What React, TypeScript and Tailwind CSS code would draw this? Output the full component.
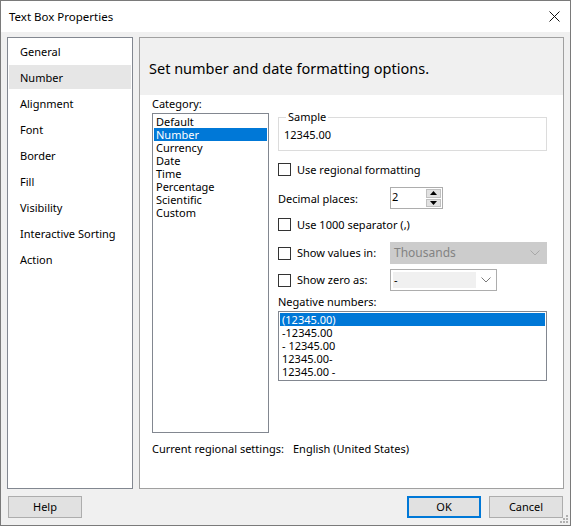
import React from "react";

const font = { fontFamily: '"Noto Sans", "Open Sans", sans-serif' };

function Checkbox() {
  return <span className="inline-block w-[13px] h-[13px] border border-[#333333] bg-white shrink-0" />;
}

function Chevron({ color }: { color: string }) {
  return (
    <svg width="10" height="6" viewBox="0 0 10 6" className="shrink-0">
      <path d="M0.5 0.5 L5 5 L9.5 0.5" fill="none" stroke={color} strokeWidth="1" />
    </svg>
  );
}

export default function App() {
  const nav = ["General", "Number", "Alignment", "Font", "Border", "Fill", "Visibility", "Interactive Sorting", "Action"];
  const cats = ["Default", "Number", "Currency", "Date", "Time", "Percentage", "Scientific", "Custom"];
  const negs = ["(12345.00)", "-12345.00", "- 12345.00", "12345.00-", "12345.00 -"];
  return (
    <div
      className="relative w-[571px] h-[526px] border border-[#7a7a7a] bg-[#f0f0f0] flex flex-col text-[11px] text-black"
      style={font}
    >
      {/* Title bar */}
      <div className="h-[31px] bg-white flex items-center justify-between pl-[8px] pr-[10px] shrink-0">
        <span className="leading-[16px] text-[11.5px]">Text Box Properties</span>
        <svg width="11" height="11" viewBox="0 0 11 11">
          <path d="M0.5 0.5 L10.5 10.5 M10.5 0.5 L0.5 10.5" stroke="#111" strokeWidth="1" />
        </svg>
      </div>

      {/* Body */}
      <div className="flex gap-[6px] pl-[6px] pt-[5px]">
        {/* Nav */}
        <div className="w-[126px] h-[452px] border border-[#828790] bg-white px-[1px] pt-[1px] flex flex-col gap-[2px]">
          {nav.map((n) => (
            <div
              key={n}
              className={`h-[24px] flex items-center pl-[11px] pt-[2px] leading-[16px] ${n === "Number" ? "bg-[#e6e6e6]" : ""}`}
            >
              {n}
            </div>
          ))}
        </div>

        {/* Main panel */}
        <div className="w-[425px] h-[452px] border border-[#a0a0a0] bg-white flex flex-col">
          <div className="h-[57px] bg-[#f0f0f0] flex items-center pl-[9px] pt-[2px]">
            <span className="text-[14.5px] leading-[20px]">Set number and date formatting options.</span>
          </div>
          <div className="pl-[12px] flex flex-col">
            <div className="flex gap-[9px]">
              {/* Category column */}
              <div className="w-[117px] flex flex-col">
                <div className="h-[16px] leading-[16px] pt-[1px]">Category:</div>
                <div className="mt-[2px] h-[320px] border border-[#828790] p-[1px] flex flex-col">
                  {cats.map((c) => (
                    <div
                      key={c}
                      className={`h-[13px] leading-[13px] px-[2px] ${c === "Number" ? "bg-[#0078d7] text-white" : ""}`}
                    >
                      {c}
                    </div>
                  ))}
                </div>
              </div>

              {/* Right column */}
              <div className="w-[269px] flex flex-col">
                <div className="relative mt-[22px] h-[34px] border border-[#dcdcdc] flex items-center pl-[5px] pt-[1px]">
                  <span className="absolute -top-[9px] left-[7px] px-[2px] bg-white leading-[16px]">Sample</span>
                  <span className="leading-[16px]">12345.00</span>
                </div>

                <div className="mt-[12px] h-[13px] flex items-center gap-[6px]">
                  <Checkbox />
                  <span className="leading-[16px]">Use regional formatting</span>
                </div>

                <div className="mt-[11px] h-[22px] flex items-center">
                  <span className="w-[112px] leading-[16px] pt-[1px]">Decimal places:</span>
                  <div className="w-[53px] h-[22px] border border-[#adadad] bg-white flex">
                    <span className="flex-1 pl-[1px] leading-[18px]">2</span>
                    <div className="w-[16px] flex flex-col gap-[1px] py-[1px] pr-[1px]">
                      <div className="flex-1 bg-[#e1e1e1] border border-[#c0c0c0] flex items-center justify-center">
                        <svg width="7" height="4" viewBox="0 0 7 4"><path d="M3.5 0 L7 4 L0 4 Z" fill="#000" /></svg>
                      </div>
                      <div className="flex-1 bg-[#e1e1e1] border border-[#c0c0c0] flex items-center justify-center">
                        <svg width="7" height="4" viewBox="0 0 7 4"><path d="M0 0 L7 0 L3.5 4 Z" fill="#000" /></svg>
                      </div>
                    </div>
                  </div>
                </div>

                <div className="mt-[9px] h-[13px] flex items-center gap-[6px]">
                  <Checkbox />
                  <span className="leading-[16px]">Use 1000 separator (,)</span>
                </div>

                <div className="mt-[11px] h-[22px] flex items-center">
                  <div className="w-[112px] flex items-center gap-[6px]">
                    <Checkbox />
                    <span className="leading-[16px]">Show values in:</span>
                  </div>
                  <div className="w-[157px] h-[22px] bg-[#cccccc] border border-[#cccccc] flex items-center justify-between pl-[3px] pr-[6px]">
                    <span className="leading-[16px] text-[#838383] text-[12px]">Thousands</span>
                    <Chevron color="#a8a8a8" />
                  </div>
                </div>

                <div className="mt-[5px] h-[22px] flex items-center">
                  <div className="w-[112px] flex items-center gap-[6px]">
                    <Checkbox />
                    <span className="leading-[16px]">Show zero as:</span>
                  </div>
                  <div className="w-[107px] h-[22px] bg-white border border-[#adadad] flex items-center p-[2px] pr-[5px] gap-[5px]">
                    <span className="w-[84px] h-[16px] bg-[#f0f0f0] pl-[1px] leading-[16px]">-</span>
                    <Chevron color="#7a7a7a" />
                  </div>
                </div>

                <div className="mt-[3px] h-[16px] leading-[16px]">Negative numbers:</div>
                <div className="mt-[1px] h-[70px] border border-[#828790] p-[1px] flex flex-col">
                  {negs.map((n, i) => (
                    <div
                      key={n}
                      className={`h-[13px] leading-[13px] px-[2px] ${i === 0 ? "bg-[#0078d7] text-white" : ""}`}
                    >
                      {n}
                    </div>
                  ))}
                </div>
              </div>
            </div>

            <div className="mt-[8px] flex leading-[16px] whitespace-nowrap">
              <span className="w-[141px]">Current regional settings:</span>
              <span>English (United States)</span>
            </div>
          </div>
        </div>
      </div>

      {/* Footer */}
      <div className="flex items-center pl-[7px] pr-[7px] mt-[7px]">
        <button className="w-[74px] h-[22px] bg-[#e1e1e1] border border-[#adadad] leading-[16px]">Help</button>
        <div className="flex-1" />
        <button className="w-[74px] h-[22px] bg-[#e1e1e1] border-2 border-[#0078d7] leading-[16px]">OK</button>
        <button className="ml-[8px] w-[74px] h-[22px] bg-[#e1e1e1] border border-[#adadad] leading-[16px]">Cancel</button>
      </div>

      <svg className="absolute right-[2px] bottom-[2px]" width="8" height="8" viewBox="0 0 8 8">
        <rect x="6" y="0" width="2" height="2" fill="#b0b0b0" />
        <rect x="3" y="3" width="2" height="2" fill="#b0b0b0" />
        <rect x="6" y="3" width="2" height="2" fill="#b0b0b0" />
        <rect x="0" y="6" width="2" height="2" fill="#b0b0b0" />
        <rect x="3" y="6" width="2" height="2" fill="#b0b0b0" />
        <rect x="6" y="6" width="2" height="2" fill="#b0b0b0" />
      </svg>
    </div>
  );
}
